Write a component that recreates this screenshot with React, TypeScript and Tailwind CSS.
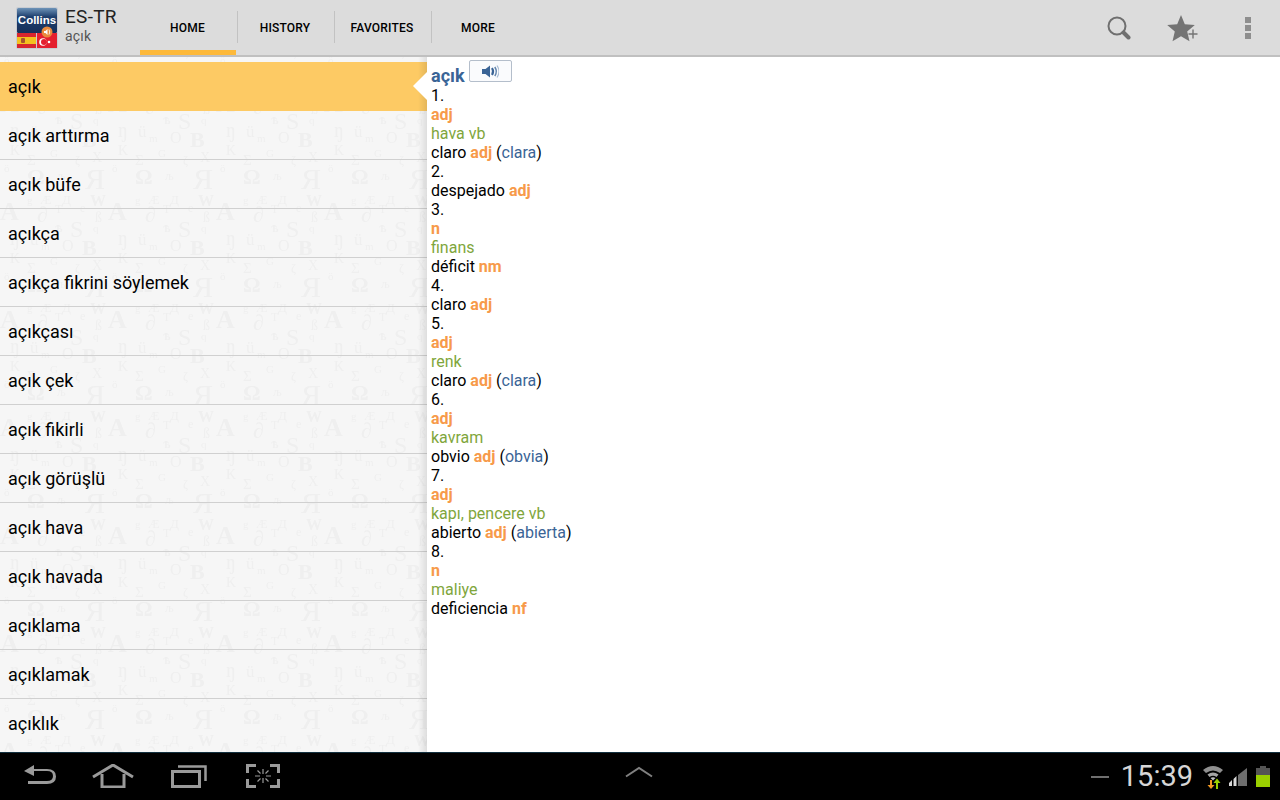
const words = [
  "açık arttırma",
  "açık büfe",
  "açıkça",
  "açıkça fikrini söylemek",
  "açıkçası",
  "açık çek",
  "açık fikirli",
  "açık görüşlü",
  "açık hava",
  "açık havada",
  "açıklama",
  "açıklamak",
  "açıklık",
];

type Part = { t: string; c?: "pos" | "blue" };

// one array per line of the entry
const entry: (string | Part[])[] = [
  "1.",
  [{ t: "adj", c: "pos" }],
  "@hava vb",
  [{ t: "claro " }, { t: "adj", c: "pos" }, { t: " (" }, { t: "clara", c: "blue" }, { t: ")" }],
  "2.",
  [{ t: "despejado " }, { t: "adj", c: "pos" }],
  "3.",
  [{ t: "n", c: "pos" }],
  "@finans",
  [{ t: "déficit " }, { t: "nm", c: "pos" }],
  "4.",
  [{ t: "claro " }, { t: "adj", c: "pos" }],
  "5.",
  [{ t: "adj", c: "pos" }],
  "@renk",
  [{ t: "claro " }, { t: "adj", c: "pos" }, { t: " (" }, { t: "clara", c: "blue" }, { t: ")" }],
  "6.",
  [{ t: "adj", c: "pos" }],
  "@kavram",
  [{ t: "obvio " }, { t: "adj", c: "pos" }, { t: " (" }, { t: "obvia", c: "blue" }, { t: ")" }],
  "7.",
  [{ t: "adj", c: "pos" }],
  "@kapı, pencere vb",
  [{ t: "abierto " }, { t: "adj", c: "pos" }, { t: " (" }, { t: "abierta", c: "blue" }, { t: ")" }],
  "8.",
  [{ t: "n", c: "pos" }],
  "@maliye",
  [{ t: "deficiencia " }, { t: "nf", c: "pos" }],
];

function Logo() {
  return (
    <svg width="42" height="42" viewBox="0 0 42 42" className="shrink-0">
      <defs>
        <linearGradient id="logoTop" x1="0" y1="0" x2="0" y2="1">
          <stop offset="0" stopColor="#6d93b8" />
          <stop offset="0.35" stopColor="#1e3f6e" />
          <stop offset="1" stopColor="#17305a" />
        </linearGradient>
      </defs>
      <rect x="0" y="0" width="42" height="42" rx="2" fill="#c8ccd2" />
      <rect x="1" y="1" width="40" height="25" rx="1.500" fill="url(#logoTop)" />
      <text x="21" y="17" textAnchor="middle" fontFamily="Liberation Sans" fontWeight="700" fontSize="11.500" fill="#fff">
        Collins
      </text>
      <rect x="1" y="26" width="19" height="15" fill="#f3c11f" />
      <rect x="1" y="26" width="19" height="4" fill="#d8262e" />
      <rect x="1" y="37" width="19" height="4" fill="#d8262e" />
      <rect x="5" y="31" width="4" height="5" rx="1" fill="#a8552a" />
      <rect x="21" y="26" width="20" height="15" fill="#e4202f" />
      <circle cx="27" cy="35" r="3.800" fill="#fff" />
      <circle cx="28" cy="35" r="3" fill="#e4202f" />
      <circle cx="33" cy="35" r="1.300" fill="#fff" />
      <circle cx="31" cy="25" r="5.500" fill="#e98a3c" />
      <path d="M28 24h1.500l2-2v6l-2-2H28z" fill="#fff" />
      <path d="M33 22.500q1.500 2.500 0 5" stroke="#fff" strokeWidth="0.800" fill="none" />
    </svg>
  );
}

function Tab({ label, active, width }: { label: string; active?: boolean; width: string }) {
  return (
    <div className={`${width} h-full flex items-center justify-center relative pr-[2px]`}>
      <span className="text-[12px] font-medium text-black tracking-[0.2px]">{label}</span>
      {active && <div className="absolute left-0 right-[1px] bottom-0 h-[5px] bg-[#fdb93a]" />}
    </div>
  );
}

function Sep() {
  return <div className="w-px h-[32px] bg-[#c2c2c2] shrink-0 -mt-[1px]" />;
}

function ActionBar() {
  return (
    <header className="h-[57px] shrink-0 bg-[#dcdcdc] border-b-2 border-[#c0c0c0] flex items-stretch">
      <div className="w-[140px] shrink-0 flex items-center pl-[16px] gap-[7px]">
        <Logo />
        <div className="flex flex-col -mt-[5px]">
          <span className="text-[19px] leading-[22px] text-[#222] tracking-[0.3px]">ES-TR</span>
          <span className="text-[14px] leading-[17px] text-[#555] tracking-[0.2px]">açık</span>
        </div>
      </div>
      <nav className="flex items-center h-[55px]">
        <Tab label="HOME" active width="w-[97px]" />
        <Sep />
        <Tab label="HISTORY" width="w-[96px]" />
        <Sep />
        <Tab label="FAVORITES" width="w-[96px]" />
        <Sep />
        <Tab label="MORE" width="w-[94px]" />
      </nav>
      <div className="ml-auto flex items-center h-[55px] pr-[29px]">
        <svg width="24" height="24" viewBox="0 0 24 24" className="mr-[36px] mt-[1px]">
          <circle cx="10" cy="10" r="8.500" stroke="#6f6f6f" strokeWidth="2" fill="none" />
          <path d="M16.500 16.500l5 5" stroke="#6f6f6f" strokeWidth="4" strokeLinecap="round" />
        </svg>
        <svg width="34" height="28" viewBox="0 0 34 28" className="mr-[44px]">
          <path d="M14 1l3.800 9.200 10 .8-7.600 6.500 2.300 9.800L14 22.200 5.500 27.300l2.300-9.800L.2 11l10-.8z" fill="#747474" />
          <path d="M26 15.500v9M21.500 20h9" stroke="#747474" strokeWidth="1.400" fill="none" />
        </svg>
        <div className="flex flex-col gap-[2px]">
          <div className="w-[6px] h-[6px] bg-[#8e8e8e]" />
          <div className="w-[6px] h-[6px] bg-[#8e8e8e]" />
          <div className="w-[6px] h-[6px] bg-[#8e8e8e]" />
        </div>
      </div>
    </header>
  );
}

// faint letter watermark behind the word list: x, baseline, size, glyph, bold
const glyphs: [number, number, number, string, boolean?][] = [
  [27, 9, 11, "g"],
  [40, 9, 13, "Æ"],
  [62, 9, 13, "Д"],
  [90, 11, 16, "W", true],
  [0, 25, 26, "A", true],
  [37, 27, 22, "∂"],
  [55, 18, 12, "T"],
  [80, 17, 12, "e"],
  [95, 27, 14, "ß"],
  [10, 50, 20, "ŋ"],
  [30, 50, 17, "ü"],
  [55, 37, 10, "Ѣ", true],
  [70, 42, 24, "S"],
  [93, 37, 11, "q"],
  [41, 55, 11, "m"],
  [62, 56, 16, "O"],
  [82, 60, 22, "B", true],
  [10, 68, 14, "K"],
  [27, 78, 15, "Σ"],
  [50, 70, 11, "G"],
  [75, 77, 12, "ζ"],
  [92, 75, 14, "X"],
  [85, 102, 30, "Я"],
  [4, 85, 11, "ö"],
  [27, 97, 22, "Ω", true],
  [57, 93, 12, "љ"],
];

function Watermark() {
  return (
    <svg className="absolute inset-0 w-full h-full">
      <defs>
        <pattern id="letters" width="108" height="108" patternUnits="userSpaceOnUse" patternTransform="translate(0 30)">
          {glyphs.map(([x, y, size, g, bold]) => (
            <text
              key={g}
              x={x}
              y={y}
              fontSize={size}
              fontFamily="Liberation Serif"
              fontWeight={bold ? 700 : 400}
              fill="#efefef"
            >
              {g}
            </text>
          ))}
        </pattern>
      </defs>
      <rect width="100%" height="100%" fill="url(#letters)" />
    </svg>
  );
}

function WordList() {
  return (
    <aside className="w-[427px] shrink-0 relative overflow-hidden bg-[#f6f6f6]">
      <Watermark />
      <div className="relative pt-[5px]">
        <div className="h-[49px] bg-[#fdc75c]/95 flex items-center pl-[8px] text-[18px] text-black relative">
          açık
          <div className="absolute right-0 top-[10px] z-10 w-0 h-0 border-y-[14px] border-y-transparent border-r-[14px] border-r-white" />
        </div>
        {words.map((w) => (
          <div key={w} className="h-[49px] border-b border-[#d0d0d0] last:border-b-0 flex items-center pl-[8px] text-[18px] text-black">
            {w}
          </div>
        ))}
      </div>
      <div className="absolute right-0 top-0 bottom-0 w-[9px] bg-gradient-to-r from-transparent to-black/10" />
    </aside>
  );
}

function Detail() {
  return (
    <section className="flex-1 bg-white pl-[4px] pt-[3px] text-[16px] leading-[19px] text-black">
      <div className="flex items-start h-[24px]">
        <span className="text-[18px] leading-[32px] font-bold text-[#3a6496]">açık</span>
        <div className="ml-[4px] w-[43px] h-[22px] rounded-[2px] border-[1.5px] border-[#b4becb] bg-[#fafbfd] flex items-center justify-center">
          <svg width="17" height="13" viewBox="0 0 17 13">
            <path d="M0 4h3.500L8 .5v12L3.500 9H0z" fill="#3a6496" />
            <path d="M10 3q2.200 3.500 0 7" stroke="#3a6496" strokeWidth="2" fill="none" />
            <path d="M12.800 2q3 4.500 0 9" stroke="#5f82ab" strokeWidth="1.500" fill="none" />
            <path d="M15 .5q4 6 0 12" stroke="#a9bdd4" strokeWidth="1.100" fill="none" />
          </svg>
        </div>
      </div>
      <div className="mt-[2px]">
        {entry.map((line, i) => {
          if (typeof line === "string") {
            if (line.startsWith("@")) {
              return (
                <div key={i} className="text-[#7fa63c]">
                  {line.slice(1)}
                </div>
              );
            }
            return <div key={i}>{line}</div>;
          }
          return (
            <div key={i} className="whitespace-pre">
              {line.map((p, j) => (
                <span
                  key={j}
                  className={p.c === "pos" ? "font-bold text-[#f79a4a]" : p.c === "blue" ? "text-[#3a6496]" : ""}
                >
                  {p.t}
                </span>
              ))}
            </div>
          );
        })}
      </div>
    </section>
  );
}

function SystemBar() {
  return (
    <footer className="h-[48px] shrink-0 bg-black border-t border-[#12303f] flex items-center">
      <div className="w-[625px] shrink-0 flex items-center pl-[23px] -mt-[1px]">
        <svg width="34" height="24" viewBox="0 0 34 24" className="mr-[35px]">
          <path d="M1 7l10-6v4h13q9 0 9 7.500T24 20H5v-3h19q6 0 6-5t-6-5H11v5z" fill="#9a9a9a" />
        </svg>
        <svg width="42" height="24" viewBox="0 0 42 24" className="mr-[37px]">
          <path d="M1 13L21 1l20 12" stroke="#9a9a9a" strokeWidth="3" fill="none" />
          <path d="M10 10v13h22V10" stroke="#9a9a9a" strokeWidth="3" fill="none" />
        </svg>
        <svg width="36" height="24" viewBox="0 0 36 24" className="mr-[39px]">
          <rect x="1.500" y="7.500" width="27" height="15" stroke="#9a9a9a" strokeWidth="3" fill="none" />
          <path d="M7 2.500h27.500V17" stroke="#9a9a9a" strokeWidth="2.500" fill="none" />
        </svg>
        <svg width="34" height="24" viewBox="0 0 34 24">
          <path d="M10 1.500H1.500V9M24 1.500h8.500V9M1.500 15v7.500H10M32.500 15v7.500H24" stroke="#9a9a9a" strokeWidth="3" fill="none" />
          <path d="M17 5v5M17 14v5M9 12h5M20 12h5M11.500 6.500l3 3M22.500 6.500l-3 3M11.500 17.500l3-3M22.500 17.500l-3-3" stroke="#9a9a9a" strokeWidth="1.200" fill="none" />
        </svg>
      </div>
      <svg width="28" height="12" viewBox="0 0 28 12" className="-mt-[10px]">
        <path d="M1 10.500L14 2l13 8.500" stroke="#808080" strokeWidth="2" fill="none" />
      </svg>
      <div className="ml-auto flex items-center pr-[10px]">
        <div className="w-[18px] h-[2px] bg-[#6f6f6f] mr-[12px]" />
        <span className="text-[29px] leading-none text-[#d6d6d6] mr-[8px]">15:39</span>
        <svg width="24" height="24" viewBox="0 0 24 24" className="mr-[3px]">
          <path d="M2 5q10-8 20 0l-3 3q-7-5-14 0z" fill="#8f8f8f" />
          <path d="M6.500 9.500q5.500-4 11 0l-2 2.500q-3.500-2.500-7 0z" fill="#a5a5a5" />
          <path d="M9.500 13q2.500-1.500 5 0L12 15.500z" fill="#c0c0c0" />
          <path d="M9 15v5H6.500l3.500 4 3.500-4H11v-5z" fill="#f39a22" />
          <path d="M15 24v-6h-2.500l3.500-4.500 3.500 4.500H17v6z" fill="#9ad000" />
        </svg>
        <svg width="19" height="18" viewBox="0 0 19 18" className="mr-[9px]">
          <path d="M1 18v-3l3-3v6zM5.500 18v-7l3-3v10z" fill="#d8d8d8" />
          <path d="M10 18V7l9-7v18z" fill="#6e6e6e" />
        </svg>
        <div className="w-[14px] h-[21px] flex flex-col items-center">
          <div className="w-[6px] h-[2px] bg-[#555]" />
          <div className="w-full h-[7px] bg-[#555]" />
          <div className="w-full flex-1 bg-[#9ad000]" />
        </div>
      </div>
    </footer>
  );
}

export default function App() {
  return (
    <div className="w-[1280px] h-[800px] overflow-hidden flex flex-col font-['Roboto',sans-serif] bg-white">
      <ActionBar />
      <main className="flex flex-1 min-h-0">
        <WordList />
        <Detail />
      </main>
      <SystemBar />
    </div>
  );
}
